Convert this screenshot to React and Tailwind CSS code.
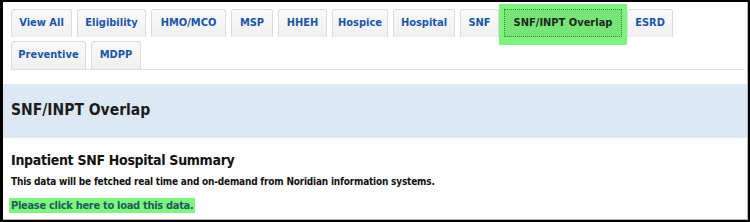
import React from 'react';

const tabsRow1 = [
  { label: 'View All', w: 'w-[61px]' },
  { label: 'Eligibility', w: 'w-[69px]' },
  { label: 'HMO/MCO', w: 'w-[75px]' },
  { label: 'MSP', w: 'w-[42px]' },
  { label: 'HHEH', w: 'w-[49px]' },
  { label: 'Hospice', w: 'w-[56px]' },
  { label: 'Hospital', w: 'w-[62px]' },
  { label: 'SNF', w: 'w-[39px]' },
  { label: 'SNF/INPT Overlap', w: 'w-[118px]', active: true },
  { label: 'ESRD', w: 'w-[46px]' },
  { label: 'Preventive', w: 'w-[75px]' },
  { label: 'MDPP', w: 'w-[50px]' },
];

const font = "font-['Tahoma','DejaVu_Sans_Condensed','DejaVu_Sans',sans-serif]";

const Tab = ({ label, w, active }) => {
  if (active) {
    return (
      <div
        className={`${w} h-[28px] flex items-center justify-center bg-[#76e476] border border-dotted border-[#3b8a3b] text-[#1e2a1e] text-[11px] font-bold whitespace-nowrap shadow-[0_0_0_5px_#80f27f,0_3px_0_5px_#80f27f]`}
      >
        {label}
      </div>
    );
  }
  return (
    <div
      className={`${w} h-[28px] flex items-center justify-center rounded-t-[3px] bg-gradient-to-b from-[#fafafa] to-[#f0f0f0] border border-[#dcdcdc] border-b-0 text-[#1a56a8] text-[11px] font-bold whitespace-nowrap`}
    >
      {label}
    </div>
  );
};

export default function App() {
  return (
    <div className={`w-[750px] h-[222px] bg-black pt-[2px] pl-[3px] pr-[2px] pb-[2px] ${font}`}>
      <div className="h-full bg-white border-r border-b border-[#b5b5b5] overflow-hidden">
        {/* Tabs */}
        <div className="ml-[8px] mr-[2px] pt-[7px] border-b border-[#dedede] flex flex-wrap gap-x-[5px] gap-y-[4px]">
          {tabsRow1.map(t => (
            <Tab key={t.label} {...t} />
          ))}
        </div>

        {/* Section header */}
        <div className="mt-[14px] h-[54px] bg-[#dce8f3] flex items-center pl-[8px]">
          <h2 className="text-[15.5px] font-bold text-[#1c1c1c]">SNF/INPT Overlap</h2>
        </div>

        {/* Body */}
        <div className="pl-[8px] pt-[12px]">
          <h3 className="text-[14px] leading-[20px] tracking-[-0.3px] font-bold text-[#111]">Inpatient SNF Hospital Summary</h3>
          <p className="mt-[4px] text-[10px] leading-[16px] tracking-[-0.2px] font-bold text-[#111]">
            This data will be fetched real time and on-demand from Noridian information systems.
          </p>
          <div className="mt-[2px]">
            <span className="-ml-[2px] inline-block px-[2px] bg-[#7ef57e] text-[11px] leading-[15px] tracking-[-0.3px] font-bold text-[#1d5d5a] cursor-pointer">
              Please click here to load this data.
            </span>
          </div>
        </div>
      </div>
    </div>
  );
}
